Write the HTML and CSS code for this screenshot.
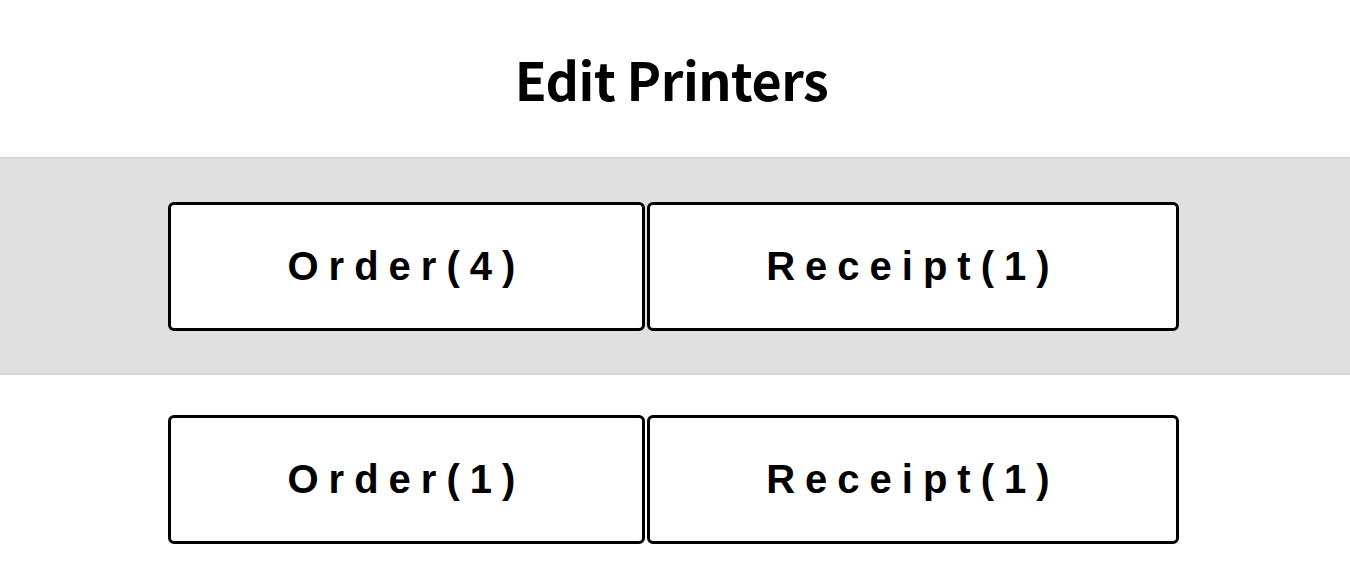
FILE: index.html
```html
<!DOCTYPE html>
<html lang="en">
<head>
<meta charset="utf-8"/>
<meta content="width=device-width, initial-scale=1.0" name="viewport"/>
<title>Edit Printers</title>
<link rel="stylesheet" href="styles.css">
</head>
<body>
<header class="page-head">
  <h1>Edit Printers</h1>
</header>
<!-- selected station -->
<section class="station active">
  <div class="printer-row">
    <button class="printer-btn">Order(4)</button>
    <button class="printer-btn">Receipt(1)</button>
  </div>
</section>
<section class="station">
  <div class="printer-row">
    <button class="printer-btn">Order(1)</button>
    <button class="printer-btn">Receipt(1)</button>
  </div>
</section>
</body>
</html>
```

FILE: styles.css
```css
body {
  margin: 0;
  background: #fff;
  font-family: 'Noto Sans CJK JP', 'Noto Sans CJK KR', sans-serif;
  color: #000;
}
.page-head {
  height: 157px;
  display: flex;
  align-items: center;
  justify-content: center;
  padding-right: 7px;
}
.page-head h1 {
  margin: 0;
  font-size: 52px;
  font-weight: 700;
  letter-spacing: -0.5px;
  line-height: 1;
}
.station { padding: 40px 0; }
.station.active {
  background: #e0e0e0;
  border-top: 2px solid #d6d6d6;
  border-bottom: 2px solid #d6d6d6;
  padding: 43px 0 42px;
}
.printer-row {
  display: flex;
  gap: 2px;
  width: 1011px;
  margin-left: 168px;
}
.printer-btn {
  flex: 1 1 auto;
  height: 129px;
  background: #fff;
  border: 3px solid #000;
  border-radius: 6px;
  font-family: 'Liberation Sans', Arial, sans-serif;
  font-size: 40px;
  font-weight: 700;
  letter-spacing: 10px;
  color: #000;
  padding: 0 20px;
  cursor: pointer;
}
```
